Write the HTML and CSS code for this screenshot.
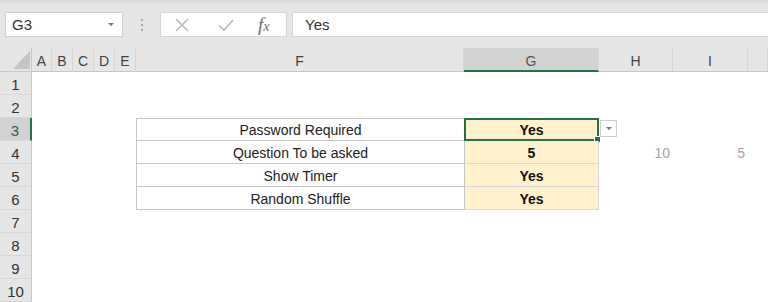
FILE: index.html
```html
<!DOCTYPE html>
<html>
<head>
<meta charset="utf-8">
<link rel="stylesheet" href="styles.css">
</head>
<body>
<div class="app">
  <div class="topbar">
    <div class="namebox">
      <span class="nb-text">G3</span>
      <span class="nb-arrow"></span>
    </div>
    <div class="grip"><span></span><span></span><span></span></div>
    <div class="fxbox">
      <svg class="ico" width="16" height="16" viewBox="0 0 16 16"><path d="M2 2 L14 14 M14 2 L2 14" stroke="#b8b8b8" stroke-width="1.5" fill="none"/></svg>
      <svg class="ico" width="18" height="16" viewBox="0 0 18 16"><path d="M2 8.5 L7 13 L16 3" stroke="#b8b8b8" stroke-width="1.6" fill="none"/></svg>
      <span class="fx">f<span class="fx-x">x</span></span>
    </div>
    <div class="formula">Yes</div>
  </div>
  <div class="sheet">
    <div class="corner c1 r0"><svg width="17" height="18" viewBox="0 0 17 18"><path d="M17 0 L17 18 L0 18 Z" fill="#c4c4c4"/></svg></div>
    <div class="colh c2 r0">A</div>
    <div class="colh c3 r0">B</div>
    <div class="colh c4 r0">C</div>
    <div class="colh c5 r0">D</div>
    <div class="colh c6 r0">E</div>
    <div class="colh c7 r0">F</div>
    <div class="colh c8 r0 active">G</div>
    <div class="colh c9 r0">H</div>
    <div class="colh c10 r0">I</div>
    <div class="colh c11 r0"></div>

    <div class="rowh c1 r1">1</div>
    <div class="rowh c1 r2">2</div>
    <div class="rowh c1 r3 active">3</div>
    <div class="rowh c1 r4">4</div>
    <div class="rowh c1 r5">5</div>
    <div class="rowh c1 r6">6</div>
    <div class="rowh c1 r7">7</div>
    <div class="rowh c1 r8">8</div>
    <div class="rowh c1 r9">9</div>
    <div class="rowh c1 r10">10</div>

    <div class="label c7 r3 first">Password Required</div>
    <div class="label c7 r4">Question To be asked</div>
    <div class="label c7 r5">Show Timer</div>
    <div class="label c7 r6">Random Shuffle</div>

    <div class="val c8 r3 first selected">Yes<span class="handle"></span><span class="dd"><span class="dd-arrow"></span></span></div>
    <div class="val c8 r4">5</div>
    <div class="val c8 r5">Yes</div>
    <div class="val c8 r6">Yes</div>

    <div class="num c9 r4">10</div>
    <div class="num c10 r4">5</div>
  </div>
</div>
</body>
</html>
```
FILE: styles.css
```css
html, body {
  margin: 0;
  padding: 0;
  background: #ffffff;
}
.app {
  width: 768px;
  height: 302px;
  overflow: hidden;
  font-family: "Liberation Sans", Arial, sans-serif;
}
.topbar {
  height: 48px;
  box-sizing: border-box;
  padding-top: 12px;
  background: linear-gradient(#d9d9d9 0px, #e6e6e6 5px, #e6e6e6 100%);
  display: flex;
  align-items: flex-start;
}
.namebox {
  margin-left: 5px;
  width: 118px;
  height: 25px;
  box-sizing: border-box;
  background: #fff;
  border: 1px solid #d2d2d2;
  display: flex;
  align-items: center;
  padding-left: 6px;
  padding-right: 8px;
  justify-content: space-between;
}
.nb-text {
  font-size: 15px;
  color: #333;
}
.nb-arrow {
  width: 0;
  height: 0;
  border-left: 3px solid transparent;
  border-right: 3px solid transparent;
  border-top: 3px solid #777;
}
.grip {
  width: 37px;
  height: 25px;
  display: flex;
  flex-direction: column;
  align-items: center;
  justify-content: center;
  gap: 3px;
}
.grip span {
  width: 2px;
  height: 2px;
  background: #a8a8a8;
  display: block;
}
.fxbox {
  width: 127px;
  height: 25px;
  box-sizing: border-box;
  background: #fff;
  border: 1px solid #d6d6d6;
  display: flex;
  align-items: center;
  padding-left: 13px;
  gap: 0;
}
.fxbox .ico:first-child {
  margin-right: 27px;
}
.fxbox .ico:nth-child(2) {
  margin-right: 23px;
}
.fx {
  font-family: "Liberation Serif", "Times New Roman", serif;
  font-style: italic;
  font-size: 19px;
  color: #6e6e6e;
  line-height: 1;
}
.fx-x {
  font-size: 14px;
}
.formula {
  margin-left: 5px;
  flex: 1;
  height: 25px;
  box-sizing: border-box;
  background: #fff;
  border: 1px solid #d6d6d6;
  border-right: none;
  font-size: 15px;
  color: #333;
  padding-left: 12px;
  display: flex;
  align-items: center;
}
.sheet {
  display: grid;
  grid-template-columns: 32px 20px 21px 21px 21px 21px 328px 135px 74px 75px 1fr;
  grid-template-rows: 24px repeat(10, 23px);
}
.c1 { grid-column: 1; }
.c2 { grid-column: 2; }
.c3 { grid-column: 3; }
.c4 { grid-column: 4; }
.c5 { grid-column: 5; }
.c6 { grid-column: 6; }
.c7 { grid-column: 7; }
.c8 { grid-column: 8; }
.c9 { grid-column: 9; }
.c10 { grid-column: 10; }
.c11 { grid-column: 11; }
.r0 { grid-row: 1; }
.r1 { grid-row: 2; }
.r2 { grid-row: 3; }
.r3 { grid-row: 4; }
.r4 { grid-row: 5; }
.r5 { grid-row: 6; }
.r6 { grid-row: 7; }
.r7 { grid-row: 8; }
.r8 { grid-row: 9; }
.r9 { grid-row: 10; }
.r10 { grid-row: 11; }

.corner {
  background: #e6e6e6;
  border-bottom: 1px solid #c8c8c8;
  border-right: 1px solid #c8c8c8;
  display: flex;
  align-items: flex-end;
  justify-content: flex-end;
  padding: 0 1px 2px 0;
}
.colh {
  background: #e6e6e6;
  border-bottom: 1px solid #c8c8c8;
  border-right: 1px solid #d6d6d6;
  font-size: 14px;
  color: #444;
  display: flex;
  align-items: center;
  justify-content: center;
  padding-top: 3px;
  box-sizing: border-box;
}
.colh.active {
  background: #d2d2d2;
  border-bottom: 2px solid #217346;
  color: #555;
}
.rowh {
  background: #e6e6e6;
  border-right: 1px solid #c8c8c8;
  border-bottom: 1px solid #d8d8d8;
  font-size: 15px;
  color: #333;
  display: flex;
  align-items: center;
  justify-content: center;
  box-sizing: border-box;
  padding-top: 2px;
}
.rowh.active {
  background: #d2d2d2;
  border-right: 2px solid #217346;
  color: #2b5e44;
}
.label {
  border-left: 1px solid #c6c6c6;
  border-bottom: 1px solid #c6c6c6;
  font-size: 14px;
  color: #222;
  display: flex;
  align-items: center;
  justify-content: center;
  box-sizing: border-box;
  padding-top: 1px;
}
.label.first, .val.first {
  border-top: 1px solid #c6c6c6;
}
.val {
  position: relative;
  background: #fff2cc;
  border-left: 1px solid #c6c6c6;
  border-right: 1px solid #d8d8d8;
  border-bottom: 1px solid #d8d8d8;
  font-size: 14px;
  font-weight: bold;
  color: #111;
  display: flex;
  align-items: center;
  justify-content: center;
  box-sizing: border-box;
  padding-top: 1px;
}
.val.selected {
  border: 2px solid #217346;
}
.handle {
  position: absolute;
  right: -4px;
  bottom: -4px;
  width: 5px;
  height: 5px;
  background: #217346;
  border: 1px solid #fff;
}
.dd {
  position: absolute;
  left: calc(100% + 3px);
  top: 0px;
  width: 17px;
  height: 17px;
  box-sizing: border-box;
  background: #fff;
  border: 1px solid #cfcfcf;
  display: flex;
  align-items: center;
  justify-content: center;
}
.dd-arrow {
  width: 0;
  height: 0;
  border-left: 3px solid transparent;
  border-right: 3px solid transparent;
  border-top: 3px solid #777;
}
.num {
  font-size: 14px;
  color: #a6a6a6;
  display: flex;
  align-items: center;
  justify-content: flex-end;
  padding-right: 3px;
  padding-top: 1px;
}
```
